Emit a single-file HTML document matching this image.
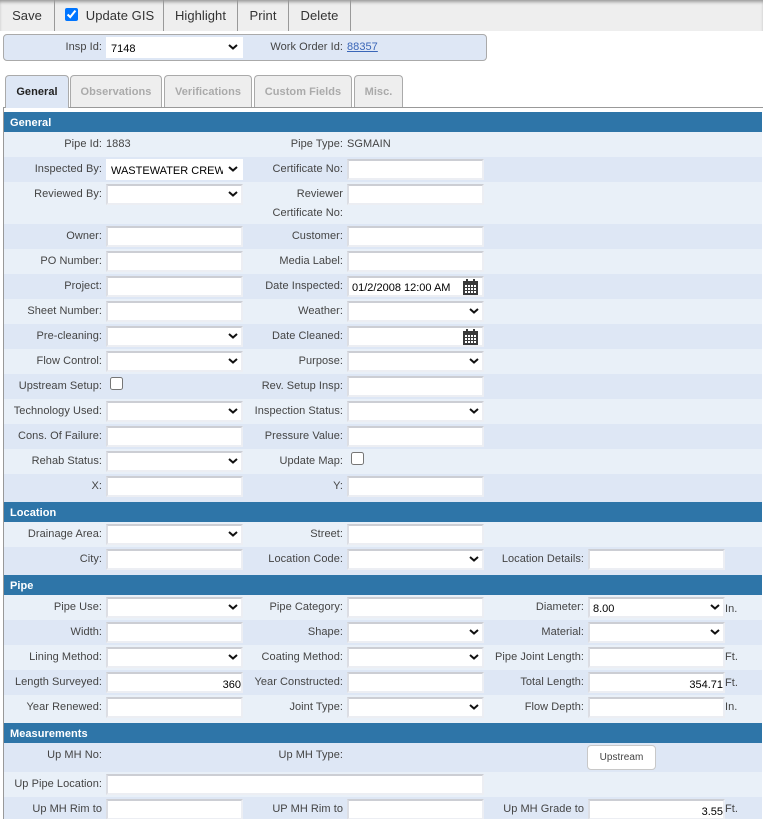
<!DOCTYPE html>
<html><head><meta charset="utf-8"><style>
html,body{margin:0;padding:0;background:#fff;width:763px;height:819px;overflow:hidden}
body{position:relative;font:11px "Liberation Sans",Arial,sans-serif;letter-spacing:.05px;color:#444}
#tb{position:absolute;left:0;top:0;width:763px;height:31px;background:#eee;box-shadow:inset 0 3px 3px -1px #999}
.b{position:absolute;top:0;height:31px;border-right:1px solid #999;box-sizing:border-box;font-size:13px;line-height:31px;text-align:center;color:#333}
#bar{position:absolute;left:3px;top:34px;width:482px;height:25px;border:1px solid #aaa;border-radius:4px;background:#dee7f5}
.t{position:absolute;top:75px;height:32px;box-sizing:border-box;border:1px solid #aaa;border-bottom:0;border-radius:4px 4px 0 0;background:#eee;color:#aaa;font:bold 11px/32px "Liberation Sans",sans-serif;text-align:center}
#p{position:absolute;left:3px;top:107px;width:759px;height:720px;border:1px solid #999;border-width:1px 1px 0 1px}
.r{position:absolute;left:4px;width:758px;background:#e9f0f8}
.d{background:#dee7f5}
.h{position:absolute;left:4px;width:758px;height:20px;background:#2e75a8;color:#fff;font:bold 11px/22px "Liberation Sans",sans-serif;text-indent:6px}
.l{position:absolute;top:5px;width:100px;text-align:right;line-height:14px;white-space:nowrap}
.l1{left:-2px}.l2{left:239px}.l3{left:480px}
.v{position:absolute;top:5px;line-height:14px}
.v1{left:102px}.v2{left:343px}
input.i,select.i{position:absolute;top:2px;width:137px;height:21px;box-sizing:border-box;margin:0;background:#fff;font:11px "Liberation Sans",sans-serif;color:#000;border:2px solid;border-color:#ccced4 #eceef3 #eceef3 #dcdee4;border-radius:0;padding:2px 2px 0;outline:0}
select.i{appearance:none;-webkit-appearance:none;padding:2px 18px 0 3px;background:#fff url("data:image/svg+xml,%3Csvg xmlns='http://www.w3.org/2000/svg' width='10' height='6'%3E%3Cpath d='M1 1l4 3.500L9 1' fill='none' stroke='%23111' stroke-width='2'/%3E%3C/svg%3E") no-repeat right 3px top 5px}
.a{left:102px}.e{left:343px}.c{left:584px}
input.n{text-align:right;padding:4px 0 0 2px}
.u{position:absolute;left:721px;top:5px;line-height:14px}
.ck{position:absolute;margin:0;width:13px;height:13px}
.cal{position:absolute;left:459px;top:5px}
</style></head><body>
<div id="tb">
<div class="b" style="left:0;width:55px">Save</div>
<div class="b" style="left:55px;width:109px;padding-left:22px">Update GIS</div>
<input type="checkbox" checked class="ck" style="left:65px;top:8px">
<div class="b" style="left:164px;width:74px">Highlight</div>
<div class="b" style="left:238px;width:51px">Print</div>
<div class="b" style="left:289px;width:62px">Delete</div>
</div>
<div id="bar"></div>
<div class="l" style="left:2px;top:40px">Insp Id:</div>
<select class="i" style="left:106px;top:37px;height:21px;border-color:#fff"><option>7148</option></select>
<div class="l" style="left:243px;top:40px">Work Order Id:</div>
<a href="#" style="position:absolute;left:347px;top:40px;line-height:14px;color:#3a66b8">88357</a>
<div class="t" style="left:5px;width:64px;height:33px;background:#dee7f5;color:#222;z-index:2">General</div>
<div class="t" style="left:70px;width:92px">Observations</div>
<div class="t" style="left:164px;width:88px">Verifications</div>
<div class="t" style="left:254px;width:98px">Custom Fields</div>
<div class="t" style="left:354px;width:49px">Misc.</div>
<div id="p"></div>

<div class="h" style="top:112px">General</div>
<div class="r" style="top:132px;height:25px"><div class="l l1">Pipe Id:</div><div class="v v1">1883</div><div class="l l2">Pipe Type:</div><div class="v v2">SGMAIN</div></div>
<div class="r d" style="top:157px;height:25px"><div class="l l1">Inspected By:</div><select class="i a" style="border-color:#fff"><option>WASTEWATER CREW</option></select><div class="l l2">Certificate No:</div><input class="i e"></div>
<div class="r" style="top:182px;height:42px"><div class="l l1">Reviewed By:</div><select class="i a"><option></option></select><div class="l l2">Reviewer</div><div class="l l2" style="top:24px">Certificate No:</div><input class="i e"></div>
<div class="r d" style="top:224px;height:25px"><div class="l l1">Owner:</div><input class="i a"><div class="l l2">Customer:</div><input class="i e"></div>
<div class="r" style="top:249px;height:25px"><div class="l l1">PO Number:</div><input class="i a"><div class="l l2">Media Label:</div><input class="i e"></div>
<div class="r d" style="top:274px;height:25px"><div class="l l1">Project:</div><input class="i a"><div class="l l2">Date Inspected:</div><input class="i e" value="01/2/2008 12:00 AM" style="padding-left:3px"><svg class="cal" width="15" height="16" viewBox="0 0 15 16"><path fill="#3a3a3a" d="M0 2h3V0h2v2h5V0h2v2h3v14H0z"/><path fill="#fff" d="M2 6h2v2H2zM5 6h2v2H5zM8 6h2v2H8zM11 6h2v2h-2zM2 9h2v2H2zM5 9h2v2H5zM8 9h2v2H8zM11 9h2v2h-2zM2 12h2v2H2zM5 12h2v2H5zM8 12h2v2H8zM11 12h2v2h-2z"/></svg></div>
<div class="r" style="top:299px;height:25px"><div class="l l1">Sheet Number:</div><input class="i a"><div class="l l2">Weather:</div><select class="i e"><option></option></select></div>
<div class="r d" style="top:324px;height:25px"><div class="l l1">Pre-cleaning:</div><select class="i a"><option></option></select><div class="l l2">Date Cleaned:</div><input class="i e"><svg class="cal" width="15" height="16" viewBox="0 0 15 16"><path fill="#3a3a3a" d="M0 2h3V0h2v2h5V0h2v2h3v14H0z"/><path fill="#fff" d="M2 6h2v2H2zM5 6h2v2H5zM8 6h2v2H8zM11 6h2v2h-2zM2 9h2v2H2zM5 9h2v2H5zM8 9h2v2H8zM11 9h2v2h-2zM2 12h2v2H2zM5 12h2v2H5zM8 12h2v2H8zM11 12h2v2h-2z"/></svg></div>
<div class="r" style="top:349px;height:25px"><div class="l l1">Flow Control:</div><select class="i a"><option></option></select><div class="l l2">Purpose:</div><select class="i e"><option></option></select></div>
<div class="r d" style="top:374px;height:25px"><div class="l l1">Upstream Setup:</div><input type="checkbox" class="ck" style="left:106px;top:3px"><div class="l l2">Rev. Setup Insp:</div><input class="i e"></div>
<div class="r" style="top:399px;height:25px"><div class="l l1">Technology Used:</div><select class="i a"><option></option></select><div class="l l2">Inspection Status:</div><select class="i e"><option></option></select></div>
<div class="r d" style="top:424px;height:25px"><div class="l l1">Cons. Of Failure:</div><input class="i a"><div class="l l2">Pressure Value:</div><input class="i e"></div>
<div class="r" style="top:449px;height:25px"><div class="l l1">Rehab Status:</div><select class="i a"><option></option></select><div class="l l2">Update Map:</div><input type="checkbox" class="ck" style="left:347px;top:3px"></div>
<div class="r d" style="top:474px;height:28px"><div class="l l1">X:</div><input class="i a"><div class="l l2">Y:</div><input class="i e"></div>

<div class="h" style="top:502px">Location</div>
<div class="r" style="top:522px;height:25px"><div class="l l1">Drainage Area:</div><select class="i a"><option></option></select><div class="l l2">Street:</div><input class="i e"></div>
<div class="r d" style="top:547px;height:28px"><div class="l l1">City:</div><input class="i a"><div class="l l2">Location Code:</div><select class="i e"><option></option></select><div class="l l3">Location Details:</div><input class="i c"></div>

<div class="h" style="top:575px">Pipe</div>
<div class="r" style="top:595px;height:25px"><div class="l l1">Pipe Use:</div><select class="i a"><option></option></select><div class="l l2">Pipe Category:</div><input class="i e"><div class="l l3">Diameter:</div><select class="i c"><option>8.00</option></select><div class="u" style="top:7px">In.</div></div>
<div class="r d" style="top:620px;height:25px"><div class="l l1">Width:</div><input class="i a"><div class="l l2">Shape:</div><select class="i e"><option></option></select><div class="l l3">Material:</div><select class="i c"><option></option></select></div>
<div class="r" style="top:645px;height:25px"><div class="l l1">Lining Method:</div><select class="i a"><option></option></select><div class="l l2">Coating Method:</div><select class="i e"><option></option></select><div class="l l3">Pipe Joint Length:</div><input class="i c"><div class="u">Ft.</div></div>
<div class="r d" style="top:670px;height:25px"><div class="l l1">Length Surveyed:</div><input class="i a n" value="360"><div class="l l2">Year Constructed:</div><input class="i e"><div class="l l3">Total Length:</div><input class="i c n" value="354.71"><div class="u" style="top:6px">Ft.</div></div>
<div class="r" style="top:695px;height:28px"><div class="l l1">Year Renewed:</div><input class="i a"><div class="l l2">Joint Type:</div><select class="i e"><option></option></select><div class="l l3">Flow Depth:</div><input class="i c"><div class="u">In.</div></div>

<div class="h" style="top:723px">Measurements</div>
<div class="r d" style="top:743px;height:29px"><div class="l l1">Up MH No:</div><div class="l l2">Up MH Type:</div><div style="position:absolute;left:583px;top:2px;width:69px;height:25px;box-sizing:border-box;background:#fff;border:1px solid #c8c8c8;border-radius:4px;font-size:10px;line-height:24px;text-align:center;color:#444">Upstream</div></div>
<div class="r" style="top:772px;height:25px"><div class="l l1">Up Pipe Location:</div><input class="i a" style="width:378px"></div>
<div class="r d" style="top:797px;height:22px"><div class="l l1">Up MH Rim to</div><input class="i a"><div class="l l2">UP MH Rim to</div><input class="i e"><div class="l l3">Up MH Grade to</div><input class="i c n" value="3.55"><div class="u">Ft.</div></div>
</body></html>
